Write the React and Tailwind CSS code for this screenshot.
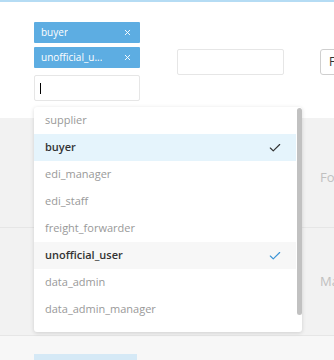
import React from 'react';
import { X, Check } from 'lucide-react';

const roles = [
    { name: 'supplier' },
    { name: 'buyer', selected: true, active: true },
    { name: 'edi_manager' },
    { name: 'edi_staff' },
    { name: 'freight_forwarder' },
    { name: 'unofficial_user', selected: true, hover: true },
    { name: 'data_admin' },
    { name: 'data_admin_manager' },
    { name: 'customs_broker' },
];

const Tag = ({ label }) => (
    <div className="flex items-center justify-between h-[21px] w-[106px] bg-[#5dade2] text-white text-[10px] pl-[7px] pr-[8px] rounded-[1px]">
        <span className="truncate">{label}</span>
        <X className="w-[9px] h-[9px] shrink-0" strokeWidth={2.5} />
    </div>
);

const App = () => {
    return (
        <div className="relative w-[334px] h-[360px] overflow-hidden bg-[#f7f7f7] font-['Open_Sans',sans-serif]">
            <div className="h-[2px] bg-[#b5dcf4]" />

            {/* Header filters */}
            <div className="flex h-[116px] bg-white">
                <div className="flex flex-col gap-[4px] pl-[34px] pt-[20px] w-[140px] shrink-0">
                    <Tag label="buyer" />
                    <Tag label="unofficial_u..." />
                    <div className="mt-[3px] h-[26px] w-[106px] border border-[#e6e6e6] rounded-[2px] flex items-center pl-[5px]">
                        <div className="w-px h-[11px] bg-black" />
                    </div>
                </div>
                <div className="pl-[37px] pt-[47px]">
                    <div className="w-[107px] h-[26px] border border-[#e6e6e6] rounded-[2px]" />
                </div>
                <div className="pl-[36px] pt-[47px]">
                    <div className="w-[40px] h-[26px] border border-[#cfcfcf] rounded-[3px] flex items-center pl-[8px] text-[12px] text-[#333]">
                        Filter
                    </div>
                </div>
            </div>

            {/* Table rows behind */}
            <div className="bg-[#f2f2f2] h-[110px] border-b border-[#e6e6e6] pt-[50px] pl-[320px] text-[13px] text-[#c0c0c0] whitespace-nowrap">
                Format
            </div>
            <div className="bg-[#f2f2f2] h-[108px] border-b border-[#e6e6e6] pt-[44px] pl-[320px] text-[13px] text-[#c0c0c0] whitespace-nowrap">
                Manage
            </div>
            <div className="pl-[34px] pt-[18px]">
                <div className="w-[103px] h-[20px] bg-[#d5e9f6]" />
            </div>

            {/* Dropdown */}
            <div className="absolute left-[34px] top-[107px] w-[268px] h-[225px] bg-white rounded-[3px] shadow-[0_1px_4px_rgba(0,0,0,0.15)] overflow-hidden">
                <div className="flex flex-col pr-[6px]">
                    {roles.map((r) => (
                        <div
                            key={r.name}
                            className={`flex items-center justify-between h-[27px] shrink-0 pl-[11px] pr-[14px] text-[11px] ${r.active ? 'bg-[#e5f4fc]' : r.hover ? 'bg-[#f7f7f7]' : ''} ${r.selected ? 'text-[#333] font-semibold' : 'text-[#999]'}`}
                        >
                            <span>{r.name}</span>
                            {r.selected && (
                                <Check
                                    className={`w-[14px] h-[14px] ${r.active ? 'text-[#333]' : 'text-[#3d95d6]'}`}
                                    strokeWidth={2}
                                />
                            )}
                        </div>
                    ))}
                </div>
                <div className="absolute right-0 top-[1px] w-[5px] h-[207px] bg-[#c1c1c1] rounded-[3px]" />
            </div>
        </div>
    );
};

export default App;
